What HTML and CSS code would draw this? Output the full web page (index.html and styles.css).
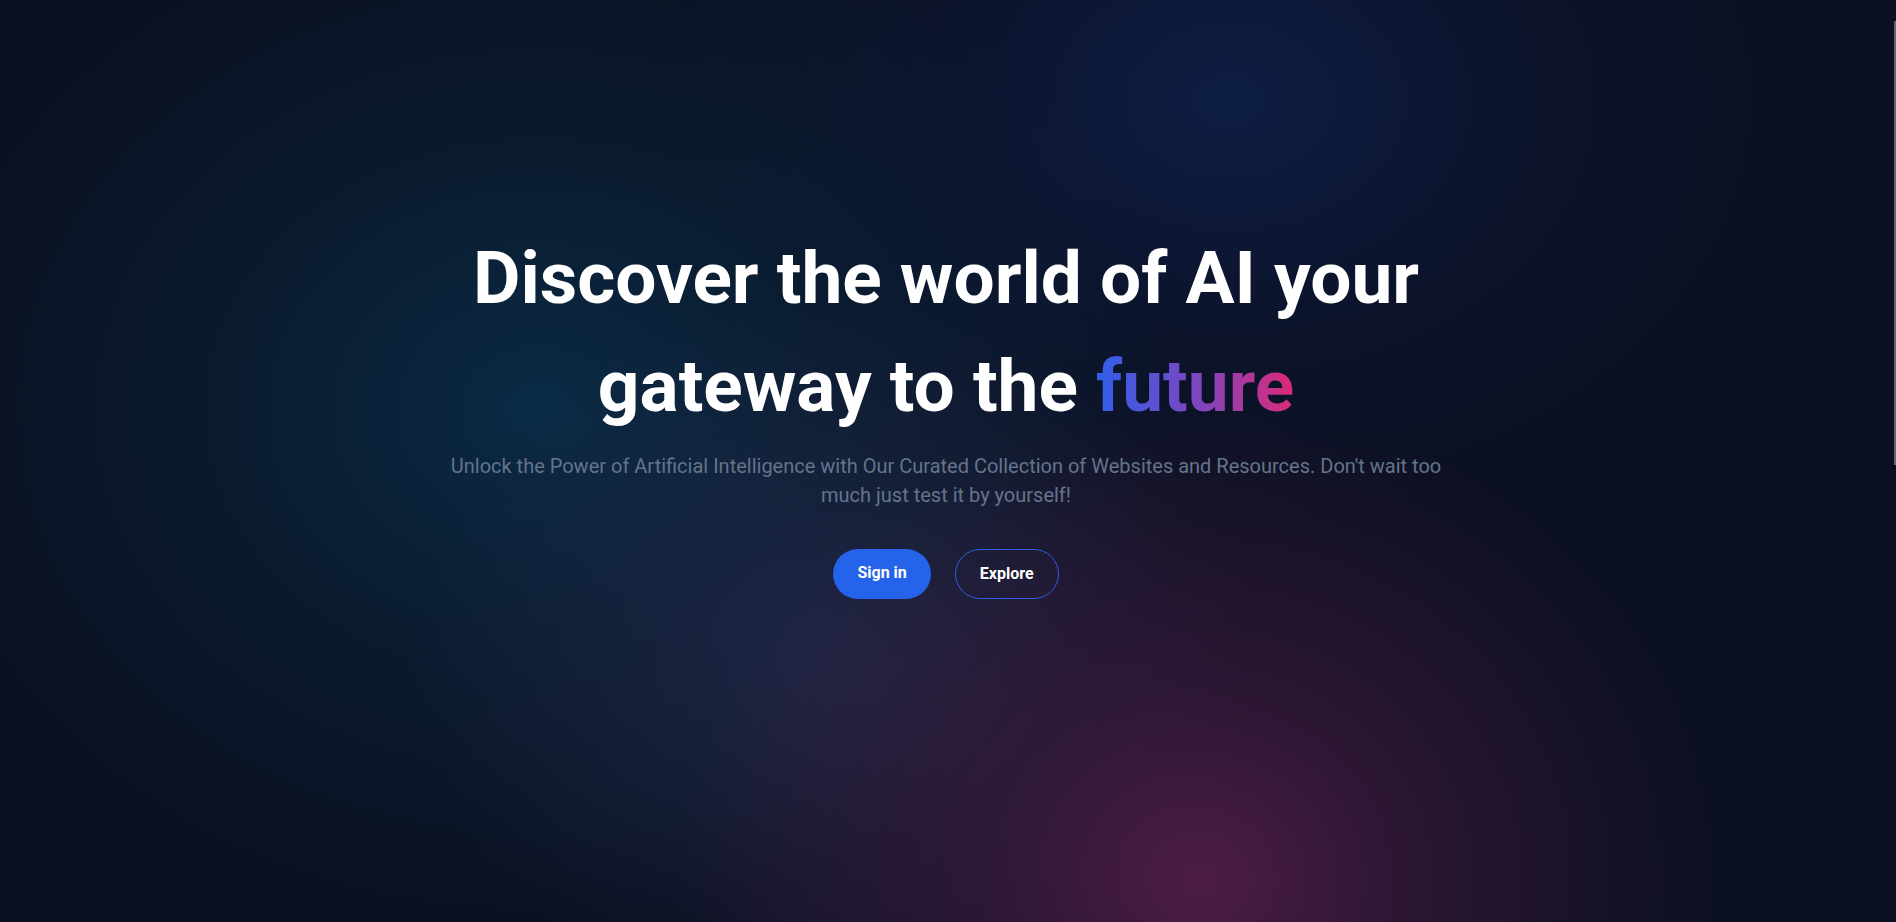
FILE: index.html
```html
<!DOCTYPE html>
<html lang="en">
<head>
    <meta charset="UTF-8">
    <meta name="viewport" content="width=device-width, initial-scale=1.0">
    <title>AI World - Discover</title>
    <link rel="stylesheet" href="styles.css">
</head>
<body>
    <div class="bg-glow"></div>
    <span class="edge-line"></span>

    <main class="hero">
        <h1 class="hero-title">
            Discover the world of AI your gateway to the <span class="gradient-text">future</span>
        </h1>
        <p class="hero-text">
            Unlock the Power of Artificial Intelligence with Our Curated Collection of Websites and Resources. Don't wait too much just test it by yourself!
        </p>
        <div class="hero-actions">
            <a href="#" class="btn btn-primary">Sign in</a>
            <a href="#" class="btn btn-outline">Explore</a>
        </div>
    </main>
</body>
</html>
```

FILE: styles.css
```css
* {
    margin: 0;
    padding: 0;
    box-sizing: border-box;
}

html, body {
    height: 100%;
    overflow: hidden;
}

body {
    font-family: Roboto, 'Liberation Sans', Arial, sans-serif;
    background: #0b1020;
    color: #fff;
    position: relative;
}

.bg-glow {
    position: absolute;
    inset: 0;
    z-index: 0;
    background:
        radial-gradient(ellipse 520px 480px at 1200px 880px, rgba(84, 30, 74, 0.9) 0%, rgba(64, 26, 62, 0.6) 40%, rgba(11, 16, 32, 0) 100%),
        radial-gradient(ellipse 420px 360px at 830px 660px, rgba(36, 42, 76, 0.75) 0%, rgba(11, 16, 32, 0) 100%),
        radial-gradient(ellipse 640px 520px at 540px 410px, rgba(10, 44, 70, 0.95) 0%, rgba(10, 36, 60, 0.6) 45%, rgba(11, 16, 32, 0) 100%),
        radial-gradient(ellipse 560px 420px at 1230px 100px, rgba(14, 30, 70, 0.95) 0%, rgba(13, 24, 58, 0.5) 50%, rgba(11, 16, 32, 0) 100%),
        #0b1020;
}

.edge-line {
    position: absolute;
    right: 0;
    top: 21px;
    width: 2px;
    height: 444px;
    background: rgba(170, 170, 180, 0.55);
    z-index: 2;
}

.hero {
    position: relative;
    z-index: 1;
    display: flex;
    flex-direction: column;
    align-items: center;
    padding-top: 224px;
    padding-right: 4px;
    text-align: center;
}

.hero-title {
    max-width: 1000px;
    font-size: 73px;
    font-weight: 700;
    line-height: 108px;
    color: #fff;
}

.gradient-text {
    background: linear-gradient(90deg, #2f5fe9 0%, #7b47c0 50%, #dc2a79 100%);
    -webkit-background-clip: text;
    background-clip: text;
    color: transparent;
}

.hero-text {
    max-width: 1000px;
    margin-top: 12px;
    font-size: 20px;
    line-height: 29px;
    color: #64748b;
}

.hero-actions {
    display: flex;
    gap: 24px;
    margin-top: 39px;
}

.btn {
    display: inline-block;
    padding: 12px 24px;
    border-radius: 999px;
    font-size: 16px;
    font-weight: 700;
    line-height: 24px;
    color: #fff;
    text-decoration: none;
}

.btn-primary {
    background: #2563eb;
}

.btn-outline {
    border: 1px solid #2f5ee0;
}
```
